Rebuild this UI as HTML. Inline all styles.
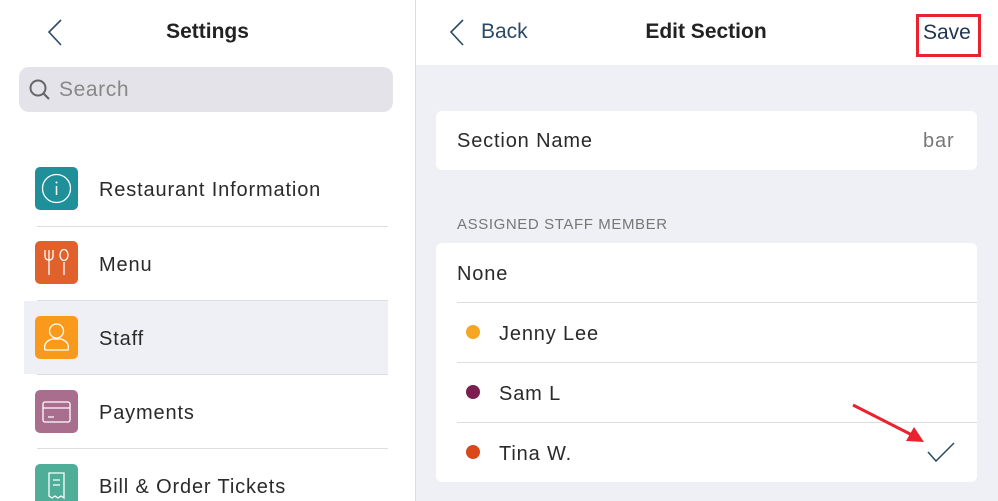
<html><head><style>
html,body{margin:0;width:998px;height:501px;overflow:hidden}
body{font-family:"Liberation Sans",sans-serif;background:#fff;position:relative;color:#222}
.a{position:absolute}
.t{font-size:20px;color:#2a2a2a;letter-spacing:0.85px}
.ic{position:absolute;left:35px;width:43px;height:43px;border-radius:5px}
.sep{position:absolute;height:1px;background:#ddd}
</style></head><body>
<div class="a" style="left:415px;top:0;width:1px;height:501px;background:#ddd"></div>
<svg class="a" style="left:44px;top:18px" width="20" height="30"><path d="M17 2 L5 14 L17 27" fill="none" stroke="#2c4a66" stroke-width="1.6"/></svg>
<div class="a" style="left:0;width:415px;top:20px;text-align:center;font-weight:bold;font-size:21px">Settings</div>
<div class="a" style="left:19px;top:67px;width:374px;height:45px;border-radius:10px;background:#e4e3ea"></div>
<svg class="a" style="left:28px;top:78px" width="24" height="24"><circle cx="10" cy="10" r="7.5" fill="none" stroke="#666" stroke-width="2"/><path d="M15.5 15.5 L21 21" stroke="#666" stroke-width="2.2"/></svg>
<div class="a" style="left:59px;top:78px;font-size:21px;color:#888;letter-spacing:0.6px">Search</div>
<div class="a" style="left:24px;top:301px;width:364px;height:73px;background:#efeff6"></div>
<div class="ic" style="top:167px;background:#1f8f9a"></div>
<svg class="a" style="left:35px;top:167px" width="43" height="43"><circle cx="21.5" cy="21.5" r="14" fill="none" stroke="#fff" stroke-width="1.3"/><path d="M21.5 19v9" stroke="#fff" stroke-width="1.5"/><circle cx="21.5" cy="15.5" r="1" fill="#fff"/></svg>
<div class="a t" style="left:99px;top:179px">Restaurant Information</div>
<div class="sep" style="left:37px;width:351px;top:226px"></div>
<div class="ic" style="top:241px;background:#e0612c"></div>
<svg class="a" style="left:35px;top:241px" width="43" height="43"><path d="M10 9v6q0 4 4 4M18 9v6q0 4-4 4M14 9v25M29 21v13" fill="none" stroke="#fff" stroke-width="1.3"/><ellipse cx="29" cy="14" rx="4" ry="5.5" fill="none" stroke="#fff" stroke-width="1.3"/></svg>
<div class="a t" style="left:99px;top:254px">Menu</div>
<div class="sep" style="left:37px;width:351px;top:300px"></div>
<div class="ic" style="top:316px;background:#f99a1c"></div>
<svg class="a" style="left:35px;top:316px" width="43" height="43"><circle cx="21.5" cy="15" r="7" fill="none" stroke="#fff" stroke-width="1.3"/><path d="M10 34q-2-8 7-11h9q9 3 7 11z" fill="none" stroke="#fff" stroke-width="1.3"/></svg>
<div class="a t" style="left:99px;top:328px">Staff</div>
<div class="sep" style="left:37px;width:351px;top:374px"></div>
<div class="ic" style="top:390px;background:#a96e8d"></div>
<svg class="a" style="left:35px;top:390px" width="43" height="43"><rect x="8" y="12" width="27" height="20" rx="2" fill="none" stroke="#fff" stroke-width="1.3"/><path d="M8 18h27M13 27h6" stroke="#fff" stroke-width="1.3"/></svg>
<div class="a t" style="left:99px;top:402px">Payments</div>
<div class="sep" style="left:37px;width:351px;top:448px"></div>
<div class="ic" style="top:464px;background:#4fae98"></div>
<svg class="a" style="left:35px;top:464px" width="43" height="43"><path d="M14 9h15v25l-3-2-3 2-3-2-3 2-3-2z" fill="none" stroke="#fff" stroke-width="1.3"/><path d="M18 16h7M18 21h7" stroke="#fff" stroke-width="1.3"/></svg>
<div class="a t" style="left:99px;top:476px">Bill &amp; Order Tickets</div>

<div class="a" style="left:416px;top:65px;width:582px;height:436px;background:#efeff6"></div>
<svg class="a" style="left:446px;top:18px" width="20" height="30"><path d="M17 2 L5 14 L17 27" fill="none" stroke="#2c4a66" stroke-width="1.6"/></svg>
<div class="a" style="left:481px;top:20px;font-size:21px;color:#2c4a66">Back</div>
<div class="a" style="left:616px;width:180px;top:20px;text-align:center;font-weight:bold;font-size:21px">Edit Section</div>
<div class="a" style="left:923px;top:21px;font-size:21px;color:#1e3550">Save</div>
<div class="a" style="left:916px;top:14px;width:59px;height:37px;border:3px solid #e8232f"></div>
<div class="a" style="left:436px;top:111px;width:541px;height:59px;background:#fff;border-radius:6px"></div>
<div class="a t" style="left:457px;top:130px">Section Name</div>
<div class="a t" style="left:923px;top:130px;color:#777">bar</div>
<div class="a" style="left:457px;top:216px;font-size:15px;color:#777;letter-spacing:.6px">ASSIGNED STAFF MEMBER</div>
<div class="a" style="left:436px;top:243px;width:541px;height:239px;background:#fff;border-radius:6px"></div>
<div class="a t" style="left:457px;top:263px">None</div>
<div class="sep" style="left:457px;width:520px;top:302px"></div>
<div class="a" style="left:466px;top:325px;width:14px;height:14px;border-radius:50%;background:#f5a623"></div>
<div class="a t" style="left:499px;top:323px">Jenny Lee</div>
<div class="sep" style="left:457px;width:520px;top:362px"></div>
<div class="a" style="left:466px;top:385px;width:14px;height:14px;border-radius:50%;background:#7a1f4f"></div>
<div class="a t" style="left:499px;top:383px">Sam L</div>
<div class="sep" style="left:457px;width:520px;top:422px"></div>
<div class="a" style="left:466px;top:445px;width:14px;height:14px;border-radius:50%;background:#d9481b"></div>
<div class="a t" style="left:499px;top:443px">Tina W.</div>
<svg class="a" style="left:920px;top:438px" width="40" height="28"><path d="M8 14 L16 23 L34 5" fill="none" stroke="#2c4a66" stroke-width="1.5"/></svg>
<svg class="a" style="left:848px;top:400px" width="80" height="48"><path d="M5 5 L66 36" stroke="#e8232f" stroke-width="3"/><path d="M76 42 L58 41 L66 27z" fill="#e8232f"/></svg>
</body></html>
